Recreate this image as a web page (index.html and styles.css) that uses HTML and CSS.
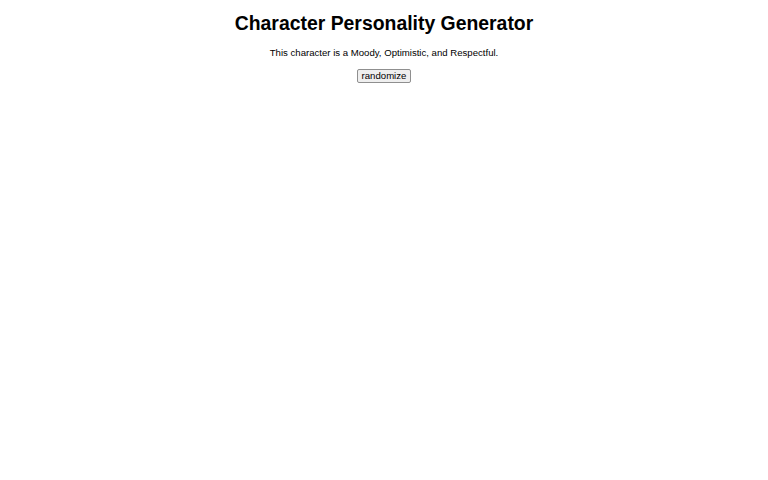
FILE: index.html
```html
<!DOCTYPE html>
<html lang="en">
<head>
<meta charset="utf-8">
<title>Character Personality Generator</title>
<link rel="stylesheet" href="styles.css">
</head>
<body>
<main class="generator">
  <h1 class="generator-title">Character Personality Generator</h1>
  <p class="generator-result">This character is a Moody, Optimistic, and Respectful.</p>
  <button class="generator-button" type="button">randomize</button>
</main>
</body>
</html>
```
FILE: styles.css
```css
body {
  margin: 8px;
  font-family: "Liberation Sans", Arial, sans-serif;
  background: #fff;
  color: #000;
}

.generator {
  text-align: center;
}

.generator-title {
  font-size: 19.4px;
  font-weight: bold;
  margin: 4px 0 0;
}

.generator-result {
  font-size: 9.6px;
  margin: 12px 0 7px;
}

.generator-button {
  font-family: "Liberation Sans", Arial, sans-serif;
  font-size: 9.6px;
  line-height: 12px;
  padding: 0 4px;
  border: 1px solid #8f8f8f;
  border-radius: 2px;
  background: #efefef;
  color: #000;
}
```
